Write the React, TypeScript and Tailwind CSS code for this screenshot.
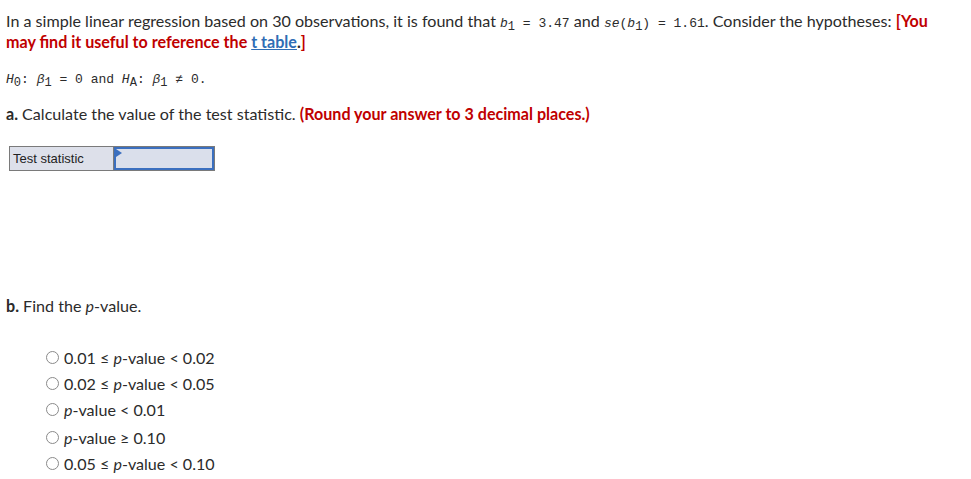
import React from "react";

const M = ({ children }: { children: React.ReactNode }) => (
  <span className="font-['Liberation_Mono','DejaVu_Sans_Mono',monospace] text-[13px] leading-none">{children}</span>
);
const I = ({ children }: { children: React.ReactNode }) => <i>{children}</i>;
const Sub = ({ children }: { children: React.ReactNode }) => (
  <span className="relative top-[3px] text-[12px] leading-none">{children}</span>
);

const Radio = ({ children, extra = "" }: { children: React.ReactNode; extra?: string }) => (
  <div className={"flex items-center h-[26px] " + extra}>
    <span className="w-[13px] h-[13px] rounded-full border border-[#8a8a8a] bg-white mr-[5px]" />
    <span>{children}</span>
  </div>
);

const P = () => <i>p</i>;

export default function App() {
  return (
    <div className="w-[971px] h-[479px] bg-white text-[#2b2b2b] font-['Lato','Open_Sans',sans-serif] text-[16.1px] leading-[21px] pl-[6px] pr-[26px] pt-[10px]">
      <p>
        In a simple linear regression based on 30 observations, it is found that{" "}
        <M>
          <I>b</I>
          <Sub>1</Sub> = 3.47
        </M>{" "}
        and{" "}
        <M>
          <I>se</I>(<I>b</I>
          <Sub>1</Sub>) = 1.61
        </M>
        . Consider the hypotheses:{" "}
        <span className="text-[#c00000] font-bold">
          [You may find it useful to reference the{" "}
          <span className="text-[#2f6db5] underline">t table</span>
          <span className="text-[#2b2b2b]">.</span>]
        </span>
      </p>
      <p className="mt-[14px]">
        <M>
          <I>H</I>
          <Sub>0</Sub>: <I>β</I>
          <Sub>1</Sub> = 0 and <I>H</I>
          <Sub>A</Sub>: <I>β</I>
          <Sub>1</Sub> ≠ 0.
        </M>
      </p>
      <p className="mt-[16px]">
        <b>a.</b> Calculate the value of the test statistic.{" "}
        <span className="text-[#c00000] font-bold">(Round your answer to 3 decimal places.)</span>
      </p>
      <div className="mt-[22px] ml-[3px] flex w-[206px] h-[25px] border border-[#7a7a7a] bg-[#dde0ea] font-['Liberation_Sans',Arial,sans-serif] text-[13px]">
        <div className="w-[104px] border-r border-[#7a7a7a] flex items-center pl-[3px] text-[#222]">
          Test statistic
        </div>
        <div className="relative flex-1 border-2 border-[#3b6fbf] bg-[#dadfeb]">
          <span className="absolute left-0 top-0 w-0 h-0 border-y-[4px] border-y-transparent border-l-[6px] border-l-[#3b6fbf]" />
        </div>
      </div>
      <p className="mt-[124px]">
        <b>b.</b> Find the <P />-value.
      </p>
      <div className="mt-[28px] ml-[40px]">
        <Radio>
          0.01 ≤ <P />-value &lt; 0.02
        </Radio>
        <Radio>
          0.02 ≤ <P />-value &lt; 0.05
        </Radio>
        <Radio>
          <P />-value &lt; 0.01
        </Radio>
        <Radio extra="mt-[2px]">
          <P />-value ≥ 0.10
        </Radio>
        <Radio>
          0.05 ≤ <P />-value &lt; 0.10
        </Radio>
      </div>
    </div>
  );
}
